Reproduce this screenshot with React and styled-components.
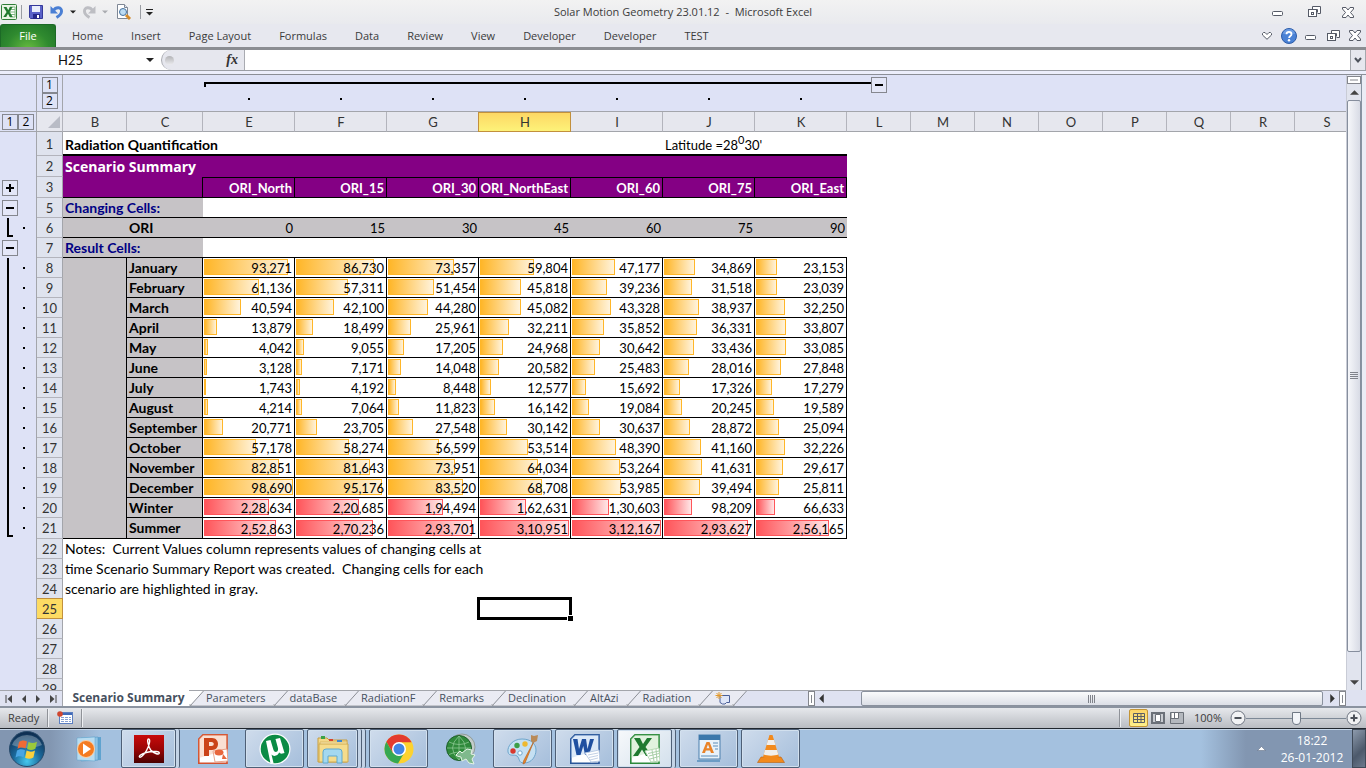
import React from "react";
import styled, { createGlobalStyle, css } from "styled-components";

const Global = createGlobalStyle`
  * { box-sizing: border-box; }
  html, body { margin: 0; padding: 0; height: 100%; overflow: hidden; }
  #root { height: 100%; }
  button, input { font: inherit; color: inherit; margin: 0; padding: 0; border: 0; background: none; }
  svg { display: block; flex: none; }
`;

const ui = '"Open Sans", "Noto Sans", sans-serif';
const cellFont = 'Lato, "Open Sans", sans-serif';

const Desktop = styled.div`
  display: flex;
  flex-direction: column;
  height: 100vh;
  font-family: ${ui};
  font-size: 11px;
  line-height: 16px;
  color: #3b3b3b;
  background: #e6e7ef;
`;

/* Title bar */
const TitleBar = styled.header`
  display: flex;
  align-items: center;
  height: 24px;
  flex: none;
  background: linear-gradient(#f2f2f2, #e9eaee);
`;
const TitleSide = styled.div`
  display: flex;
  align-items: center;
  flex: 1 1 0;
  gap: ${(p) => p.$gap || 0}px;
  justify-content: ${(p) => (p.$end ? "flex-end" : "flex-start")};
  padding: ${(p) => (p.$end ? "0 12px 0 1px" : "0 12px 0 1px")};
`;
const Title = styled.h1`
  margin: 0;
  font-size: 11px;
  line-height: 16px;
  font-weight: 400;
  white-space: pre;
`;
const IconButton = styled.button`
  display: flex;
  align-items: center;
  justify-content: center;
  width: ${(p) => p.$w || 16}px;
  height: 16px;
  flex: none;
`;
const QuickDivider = styled.span`
  width: 1px;
  height: 14px;
  background: #9a9da3;
  margin: 0 ${(p) => p.$r || 0}px 0 ${(p) => p.$l || 0}px;
`;

/* Ribbon */
const Ribbon = styled.nav`
  display: flex;
  height: 26px;
  flex: none;
  border-bottom: 3px solid #8b8d92;
  background: #e7e8ef;
`;
const FileTab = styled.button`
  width: 56px;
  height: 23px;
  border: 1px solid #1c6a26;
  border-bottom: 0;
  border-radius: 3px 3px 0 0;
  color: #fff;
  background: radial-gradient(ellipse at 50% 110%, #66bb3f, #2f8a2f 55%, #1f7328);
  margin-right: 2px;
`;
const RibbonTab = styled.button`
  padding: 0 14px;
  height: 23px;
`;
const RibbonTools = styled.div`
  display: flex;
  align-items: center;
  gap: 6px;
  margin-left: auto;
  padding-right: 3px;
`;

/* Formula bar */
const FormulaBar = styled.div`
  display: flex;
  align-items: stretch;
  height: 21px;
  flex: none;
  background: #fff;
  border-bottom: 1px solid #9b9ea5;
  color: #111;
`;
const NameBox = styled.input`
  width: 141px;
  text-align: center;
  font-family: ${cellFont};
  font-size: 13px;
  outline: 0;
`;
const NameArrow = styled.button`
  display: flex;
  align-items: center;
  justify-content: center;
  width: 18px;
`;
const FxArea = styled.div`
  display: flex;
  align-items: center;
  justify-content: space-between;
  width: 84px;
  margin-left: 2px;
  padding: 0 6px 0 3px;
  border: 1px solid #a9abb1;
  border-width: 0 1px;
  border-radius: 10px 0 0 10px;
  background: #e6e7ee;
`;
const Knob = styled.span`
  width: 9px;
  height: 9px;
  border-radius: 50%;
  background: linear-gradient(#b2b3b6, #ececef);
`;
const FxButton = styled.button`
  font: italic 700 14px/18px "Liberation Serif", serif;
  color: #333;
`;
const FormulaInput = styled.input`
  flex: 1;
  min-width: 0;
  outline: 0;
`;
const ExpandButton = styled.button`
  display: flex;
  align-items: center;
  justify-content: center;
  width: 16px;
  background: #e6e7ee;
  border: 1px solid #a5a8ae;
  border-width: 0 1px;
`;
const Splitter = styled.div`
  height: 4px;
  flex: none;
  background: #eceefb;
  border-bottom: 1px solid #8b8e96;
`;

/* Workspace */
const Workspace = styled.main`
  display: flex;
  flex: 1;
  min-height: 0;
`;
const GridPane = styled.div`
  display: flex;
  flex-direction: column;
  flex: 1;
  min-width: 0;
  background: #fff;
`;
const ColumnOutline = styled.div`
  display: flex;
  height: 37px;
  flex: none;
  background: #dee2f6;
  border-bottom: 1px solid #a3a5ab;
`;
const OutlineCorner = styled.div`
  width: 37px;
  border-right: 1px solid #a3a5ab;
`;
const ColumnLevels = styled.div`
  display: flex;
  flex-direction: column;
  align-items: center;
  width: 26px;
  padding-top: 2px;
  border-right: 1px solid #a3a5ab;
`;
const LevelButton = styled.button`
  width: 16px;
  height: 16px;
  border: 1px solid #85878f;
  font-size: 12px;
  line-height: 14px;
  color: #000;
  padding: 0;
  text-align: center;
`;
const ColumnRail = styled.div`
  flex: 1;
  min-width: 0;
  padding: 2px 0 0 140px;
`;
const RailRow = styled.div`
  display: flex;
  height: 16px;
  padding-left: 1px;
`;
const ColumnBracket = styled.span`
  width: 667px;
  height: 5px;
  margin-top: 5px;
  border-top: 2px solid #000;
  border-left: 2px solid #000;
`;
const DotRow = styled.div`
  display: grid;
  grid-template-columns: repeat(7, 92px);
  justify-items: center;
  align-items: center;
  height: 12px;
`;
const Dot = styled.i`
  width: 2px;
  height: 2px;
  background: #000;
`;
const ToggleButton = styled.button`
  display: flex;
  align-items: center;
  justify-content: center;
  width: 16px;
  height: 16px;
  flex: none;
  border: 1px solid #85878f;
  background: #e3e6f7;
`;

const GridBody = styled.div`
  display: flex;
  flex: 1;
  min-height: 0;
  overflow: hidden;
`;
const RowOutline = styled.div`
  width: 37px;
  flex: none;
  background: #dee2f6;
  border-right: 1px solid #a3a5ab;
`;
const RowLevels = styled.div`
  display: flex;
  align-items: center;
  height: 20px;
  padding-left: 2px;
  border-bottom: 1px solid #a3a5ab;
`;
const OutlineRow = styled.div`
  display: grid;
  grid-template-columns: 16px 1fr;
  align-items: center;
  height: ${(p) => p.$h || 20}px;
  padding-left: 2px;
`;
const RowBracket = styled.span`
  align-self: start;
  height: ${(p) => (p.$end ? "calc(100% - 1px)" : "100%")};
  width: 6px;
  margin-left: 5px;
  border-left: 2px solid #000;
  border-bottom: ${(p) => (p.$end ? "2px solid #000" : "0")};
`;
const RowDot = styled(Dot)`
  margin-left: 5px;
`;

const SheetBox = styled.div`
  flex: 1;
  min-width: 0;
  overflow: hidden;
`;
const Sheet = styled.table`
  width: calc(100% + 13px);
  table-layout: fixed;
  border-collapse: separate;
  border-spacing: 0;
  font-family: ${cellFont};
  font-size: 13px;
  line-height: 18px;
  color: #000;
`;
const Row = styled.tr`
  height: ${(p) => p.$h || 20}px;
`;
const ColHead = styled.th`
  height: 20px;
  padding: 1px 0 0 1px;
  font-weight: 400;
  color: #333;
  background: #e6e7ee;
  border-right: 1px solid #b3b4bc;
  border-bottom: 1px solid #a3a5ab;
  ${(p) =>
    p.$on &&
    css`
      background: linear-gradient(#fdd663, #fdf279);
      border-color: #c2903c;
      box-shadow: inset 0 1px #c2903c, -1px 0 #c2903c;
    `}
`;
const RowHead = styled.th`
  padding: 0;
  font-weight: 400;
  color: #333;
  background: #dfe3ee;
  border-right: 1px solid #a3a5ab;
  border-bottom: 1px solid #b3b4bc;
  ${(p) =>
    p.$on &&
    css`
      background: #fddb63;
      border-color: #c2903c;
      box-shadow: 0 -1px #c2903c;
    `}
`;
const CornerMark = styled.svg`
  margin-left: 10px;
`;
const Cell = styled.td`
  padding: 0 2px;
  white-space: nowrap;
  overflow: hidden;
  text-align: ${(p) => (p.$right ? "right" : "left")};
  font-weight: ${(p) => (p.$bold ? 700 : 400)};
  font-size: ${(p) => (p.$bold ? 14 : 13)}px;
`;
const RadiationTitle = styled(Cell)`
  border-bottom: 2px solid #000;
  padding-top: 3px;
  sup { font-size: 11px; line-height: 0; vertical-align: 6px; }
`;
const SummaryTitle = styled(Cell)`
  background: #840084;
  color: #fff;
  font-family: ${ui};
  font-weight: 700;
  font-size: 14px;
`;
const ScenarioHead = styled.th`
  padding: 2px 2px 0 0;
  background: #840084;
  color: #fff;
  text-align: right;
  white-space: nowrap;
  border-right: 1px solid #000;
  border-bottom: 1px solid #000;
  box-shadow: inset 0 1px #000, -1px 0 #000;
`;
const PurpleFill = styled(Cell)`
  background: #840084;
  border-bottom: 1px solid #000;
`;
const GrayCell = styled(Cell)`
  background: #c6c3c6;
  color: ${(p) => (p.$blue ? "#000084" : "#000")};
  border-bottom: ${(p) => (p.$line ? "1px solid #000" : "0")};
  border-right: ${(p) => (p.$edge ? "1px solid #000" : "0")};
`;
const LinedCell = styled(Cell)`
  border-bottom: 1px solid #000;
`;
const ValueCell = styled.td`
  padding: 0;
  border-right: 1px solid #000;
  border-bottom: 1px solid #000;
`;
const ValueStack = styled.div`
  display: grid;
  padding: 0 1px;
  > * { grid-area: 1 / 1; }
`;
const Bar = styled.span`
  height: 16px;
  margin-top: 1px;
  align-self: start;
  border: 1px solid ${(p) => (p.$red ? "#ff555a" : "#ffb628")};
  background: linear-gradient(90deg, ${(p) => (p.$red ? "#ff555a, #ffe6e7" : "#ffb628, #fff3dc")});
`;
const Amount = styled.span`
  text-align: right;
  padding-right: 1px;
  padding-top: 1px;
`;
const SelectedCell = styled(Cell)`
  position: relative;
  overflow: visible;
`;
const Cursor = styled.span`
  position: absolute;
  inset: -2px -1px -1px -2px;
  border: 3px solid #000;
`;
const FillHandle = styled.i`
  position: absolute;
  right: -2px;
  bottom: -2px;
  width: 6px;
  height: 6px;
  background: #000;
  border: 1px solid #fff;
  border-width: 1px 0 0 1px;
`;

/* Scroll bars */
const VerticalBar = styled.div`
  display: flex;
  flex-direction: column;
  width: 15px;
  flex: none;
  background: #e1e4ee;
  border-left: 1px solid #c9ccd6;
`;
const SplitBox = styled.span`
  height: 8px;
  margin: 1px 0 0;
  background: #fff;
  border: 1px solid #84868d;
  display: flex;
  align-items: center;
  justify-content: center;
  flex: none;
`;
const ArrowButton = styled.button`
  display: flex;
  align-items: center;
  justify-content: center;
  width: 14px;
  height: 16px;
  flex: none;
`;
const VerticalThumb = styled.div`
  display: flex;
  align-items: center;
  justify-content: center;
  flex: 1;
  border: 1px solid #868e9d;
  border-radius: 2px;
  background: linear-gradient(90deg, #f6f7fa, #d8dbe5);
`;
const VerticalSpace = styled.span`
  height: 22px;
  flex: none;
`;
const WindowEdge = styled.div`
  width: 5px;
  flex: none;
  background: #ebecf5;
  border-left: 1px solid #8793a2;
`;

/* Sheet tabs */
const TabStrip = styled.div`
  display: flex;
  height: 16px;
  flex: none;
  background: #dfe2f1;
  color: #46505e;
  font-family: ${ui};
`;
const TabNav = styled.div`
  display: flex;
  align-items: center;
  justify-content: space-around;
  width: 63px;
  padding: 0 2px;
  border-right: 1px solid #a3a5ab;
  border-top: 1px solid #a3a5ab;
`;
const NavButton = styled.button`
  display: flex;
  width: 14px;
  justify-content: center;
`;
const ActiveTab = styled.button`
  width: 126px;
  padding-left: 5px;
  background: #fff;
  font-size: 12px;
  font-weight: 700;
  white-space: nowrap;
`;
const SheetTab = styled.button`
  display: flex;
  align-items: center;
  gap: 2px;
  padding-right: ${(p) => (p.$tight ? 1 : 7)}px;
  border-top: 1px solid #a3a5ab;
  border-bottom: 1px solid #c4c6cd;
  background: #eaebf3;
  line-height: 14px;
`;
const TabEnd = styled.span`
  display: flex;
  border-top: 1px solid #a3a5ab;
`;
const Slant = styled.svg`
  width: 15px;
  height: 15px;
`;
const TabsRest = styled.div`
  flex: 1;
  border-top: 1px solid #a3a5ab;
`;
const HorizontalBar = styled.div`
  display: flex;
  align-items: center;
  width: calc(40% - 8px);
  margin-right: 20px;
  flex: none;
  border-top: 1px solid #a3a5ab;
`;
const TabSplit = styled.span`
  width: 7px;
  height: 15px;
  border: 1px solid #84868d;
  background: #fff;
  flex: none;
  display: flex;
  justify-content: center;
  align-items: center;
`;
const HorizontalThumb = styled.div`
  display: flex;
  align-items: center;
  justify-content: center;
  flex: 1;
  height: 15px;
  margin: 0 2px 0 32px;
  border: 1px solid #8a919e;
  border-radius: 2px;
  background: linear-gradient(#fafbfc, #dcdfe7);
`;

/* Status bar */
const StatusBar = styled.footer`
  display: flex;
  align-items: center;
  height: 22px;
  flex: none;
  padding: 0 4px 0 8px;
  border-top: 2px solid #8b93a0;
  background: linear-gradient(#e6e8ec, #b9bcc2);
`;
const StatusDivider = styled.span`
  width: 2px;
  height: 18px;
  border-left: 1px solid #8f9298;
  border-right: 1px solid #eef0f3;
  margin: 0 8px;
`;
const StatusRight = styled.div`
  display: flex;
  align-items: center;
  margin-left: auto;
`;
const ViewButton = styled.button`
  display: flex;
  align-items: center;
  justify-content: center;
  width: 19px;
  height: 18px;
  ${(p) =>
    p.$on &&
    css`
      background: linear-gradient(#fcd567, #fff08a);
      border: 1px solid #c39436;
      border-radius: 2px;
    `}
`;
const ZoomLabel = styled.output`
  margin: 0 8px 0 8px;
`;
const ZoomButton = styled.button`
  display: flex;
`;
const ZoomSlider = styled.input`
  appearance: none;
  width: 100px;
  height: 18px;
  background: linear-gradient(#7d8896, #7d8896) center / 100% 1px no-repeat;
  &::-webkit-slider-thumb {
    appearance: none;
    width: 9px;
    height: 13px;
    background: #f2f4f8;
    border: 1px solid #6f7885;
    border-radius: 1px 1px 5px 5px;
  }
`;

/* Taskbar */
const Taskbar = styled.div`
  display: flex;
  align-items: center;
  height: 40px;
  flex: none;
  border-top: 1px solid #20262e;
  box-shadow: inset 0 1px #c6d6e8;
  background: linear-gradient(90deg, #8296b1 0, #8296b1 50px, #a4c1df 100px, #a4c1df calc(100% - 165px), #8296b1 calc(100% - 120px), #8296b1);
`;
const StartButton = styled.button`
  display: flex;
  width: 59px;
  padding-left: 8px;
`;
const TaskSlot = styled.div`
  display: flex;
  width: 62px;
`;
const TaskButton = styled.button`
  display: flex;
  align-items: center;
  justify-content: center;
  width: ${(p) => 59 - 4 * (p.$stack || 0)}px;
  height: 39px;
  ${(p) =>
    p.$open &&
    css`
      border: 1px solid #4e5f76;
      border-radius: 2px;
      box-shadow: inset 0 0 0 1px #d2e0ee;
      background: ${p.$front ? "linear-gradient(135deg, #f7f9fb, #d3e0ec)" : "linear-gradient(135deg, #cfdcec, #a5bedb)"};
    `}
`;
const StackEdge = styled.span`
  width: 4px;
  height: 39px;
  border-right: 1px solid #4e5f76;
  border-radius: 0 2px 2px 0;
  background: #c3d3e6;
`;
const Tray = styled.div`
  display: flex;
  align-items: center;
  margin-left: auto;
  height: 39px;
  color: #fff;
`;
const Clock = styled.time`
  width: 80px;
  margin-left: 6px;
  text-align: center;
  font-size: 12px;
  line-height: 17px;
`;
const ShowDesktop = styled.button`
  width: 14px;
  height: 39px;
  border: 1px solid #3f4a58;
  background: linear-gradient(135deg, #8d9aac, #4c596b 60%, #6c7a8d);
`;

/* Icons */
const Tri = ({ d = "down", c = "#222", s = 8 }) => {
  const paths = { down: "M0 2h8l-4 4z", up: "M0 6h8L4 2z", left: "M6 0v8L2 4z", right: "M2 0v8l4-4z" };
  return <svg width={s} height={s} viewBox="0 0 8 8"><path d={paths[d]} fill={c} /></svg>;
};
const MinIcon = () => (
  <svg width="12" height="12"><rect x=".5" y="5.500" width="10" height="4" rx="1" fill="#fff" stroke="#555a66" /></svg>
);
const RestoreIcon = () => (
  <svg width="13" height="12"><path d="M4.500 3.500v-3h8v7h-3" fill="#fff" stroke="#555a66" /><path d="M6.500 3.500h3v3" fill="none" stroke="#555a66" /><rect x=".5" y="3.500" width="8" height="7" fill="#fff" stroke="#555a66" /><rect x="3.500" y="6.500" width="2" height="2" fill="#fff" stroke="#555a66" /></svg>
);
const CloseIcon = () => (
  <svg width="12" height="11"><path d="M.5.5h3.500l2 2.500 2-2.500h3.500v1.500L8.500 5.500l3 3.500v1.500H8l-2-2.500-2 2.500H.5V9l3-3.500-3-3.500z" fill="#fff" stroke="#555a66" /></svg>
);
const HeartIcon = () => (
  <svg width="10" height="8"><path d="M.5 1.500l1-1h1.500l2 2 2-2h1.500l1 1v1.500L5 7.300.5 3z" fill="#fff" stroke="#555a66" /></svg>
);
const HelpIcon = () => (
  <svg width="16" height="16"><circle cx="8" cy="8" r="7.500" fill="#4a82d6" stroke="#2c5ca8" /><path d="M2 6a6 5 0 0 1 12 0" fill="#7faaea" opacity=".6" /><path d="M5.500 6.200c0-3.200 5-3.200 5 0 0 1.800-2.400 1.700-2.400 3.800" fill="none" stroke="#fff" strokeWidth="1.800" /><circle cx="8" cy="12.300" r="1.200" fill="#fff" /></svg>
);
const ExcelSmall = () => (
  <svg width="16" height="16"><rect x=".5" y=".5" width="15" height="15" rx="1" fill="#e9f4e4" stroke="#2f7d37" /><path d="M9 3h5v10H9z" fill="#fff" stroke="#82b984" /><path d="M9 5.500h5M9 8h5M9 10.500h5" stroke="#82b984" /><path d="M2.500 3h3l1.700 3.200L9 3h2.700L8.500 8l3.300 5H8.800L7 9.800 5.200 13H2.300l3.300-5z" fill="#217a2e" /></svg>
);
const SaveIcon = () => (
  <svg width="14" height="14"><path d="M.5.5h13v13H1.500l-1-1z" fill="#5a62c8" stroke="#34399a" /><path d="M3 1h8v6H3z" fill="#e9eefb" /><path d="M4 9h7v5H4z" fill="#26298a" /><path d="M8 10h2v3H8z" fill="#fff" /></svg>
);
const UndoIcon = ({ c = "#4a7fd4", flip }) => (
  <svg width="14" height="14" viewBox="0 0 14 14"><g transform={flip ? "translate(14 0) scale(-1 1)" : undefined}><path d="M3.500 5.500C6 1.500 12 2 11.500 6.500 11.300 9.500 9 11 6.500 12.500" fill="none" stroke={c} strokeWidth="3" /><path d="M.5 1v7.500H8z" fill={c} /></g></svg>
);
const PreviewIcon = () => (
  <svg width="16" height="16"><path d="M1.500.5h7l3 3v11h-10z" fill="#fff" stroke="#7e8795" /><path d="M8.500.5v3h3" fill="#dfe5ee" stroke="#7e8795" /><circle cx="7" cy="8" r="3.500" fill="#bcdcf3" stroke="#44719f" /><path d="M10 11l4 4" stroke="#d38b2c" strokeWidth="3" /></svg>
);
const MacroIcon = () => (
  <svg width="16" height="14"><rect x="2.500" y="1.500" width="13" height="11" fill="#fff" stroke="#5b7ec0" /><path d="M3 2h12v2H3z" fill="#3f69b8" /><path d="M4 6.500h10M4 8.500h10M4 10.500h10" stroke="#86a1d4" strokeDasharray="3 1" /><circle cx="3" cy="3" r="2.800" fill="#d0462f" /></svg>
);
const NewSheetIcon = () => (
  <svg width="16" height="13"><path d="M5 3.500h9.500v7h-3l-1.500 1.500H7.500L5 10.500z" fill="#dfe6f8" stroke="#4a5f98" /><path d="M4 0v7M.5 3.500h7M1.500 1l5 5M6.500 1l-5 5" stroke="#e39a2d" /></svg>
);

const Orb = () => (
  <svg width="38" height="38" viewBox="0 0 38 38">
    <defs>
      <radialGradient id="orb" cx=".5" cy=".85" r=".8"><stop offset="0" stopColor="#45c8ee" /><stop offset=".5" stopColor="#1a6799" /><stop offset="1" stopColor="#0f2f52" /></radialGradient>
    </defs>
    <circle cx="19" cy="19" r="17.500" fill="url(#orb)" stroke="#274a6b" />
    <path d="M4 15a15.500 13.500 0 0 1 30 0c-9 4-20 4-30 0z" fill="#fff" opacity=".28" />
    <path d="M11 12c3-2 5-2 8-.5l-1.500 7c-3-1.500-5-1.500-8 .3z" fill="#ee6a35" />
    <path d="M20.500 12c3 1.500 5.500 1.500 8.500-.3l-1.600 7c-3 1.700-5.300 1.700-8.300.3z" fill="#9bc93b" />
    <path d="M9 20.500c3-1.700 5-1.700 8-.2l-1.500 7c-3-1.500-5-1.500-8 .2z" fill="#49a5e4" />
    <path d="M18.600 20.600c3 1.500 5.300 1.500 8.400-.1l-1.600 7c-3 1.700-5.300 1.700-8.300.2z" fill="#fbd03d" />
  </svg>
);
const MediaIcon = () => (
  <svg width="28" height="28"><path d="M9 3l17-1v23l-17 1z" fill="#5fa3cf" /><path d="M6 3l17-1v23L6 26z" fill="#8fc4e5" stroke="#4d94c2" strokeWidth=".5" /><path d="M2 3l18-1v24L2 25z" fill="#b8dcf0" stroke="#5ca2cc" strokeWidth=".5" /><circle cx="11" cy="14" r="8.500" fill="#f47b20" stroke="#fbd1a8" /><path d="M8 8.500v11l8-5.500z" fill="#fff" /></svg>
);
const AcrobatIcon = () => (
  <svg width="30" height="30"><defs><linearGradient id="acro" x2="0" y2="1"><stop offset="0" stopColor="#c80a0a" /><stop offset=".5" stopColor="#9b0505" /><stop offset="1" stopColor="#4a0000" /></linearGradient></defs><path d="M0 1h30v28H0z" fill="url(#acro)" /><path d="M14.500 5c2.500 0 .5 7-2 11.500S6.500 24 5.500 23c-1.500-1.800 6-4.800 10.500-5.300 4-.5 9.500-.4 9.300 1.500-.3 2-6-.2-8.600-3.200C14.500 13 12.500 5 14.500 5z" fill="none" stroke="#fff" strokeWidth="1.400" /></svg>
);
const OfficeIcon = ({ c, light, mark }) => (
  <svg width="30" height="30" viewBox="0 0 30 30">
    <path d="M5 .8h24v28.400H.8V5z" fill="#fff" stroke={c} strokeWidth="1.600" />
    <path d="M5 .8h24v15L.8 24V5z" fill={light} opacity=".35" />
    {mark}
  </svg>
);
const PptIcon = () => (
  <OfficeIcon c="#d35230" light="#f4a582" mark={<><path d="M6 4h8c8 0 8 12 0 12h-3v6H6zM11 8v4h2.500c3 0 3-4 0-4z" fill="#cb4318" fillRule="evenodd" /><path d="M15 17l14-2 1 12-13 1z" fill="#fff" stroke="#e9a48c" /><ellipse cx="21" cy="18.500" rx="4.500" ry="3" fill="#e8663c" /><path d="M25 20l4 5h-5z" fill="#e8663c" /></>} />
);
const WordIcon = () => (
  <OfficeIcon c="#2a5699" light="#9cbfea" mark={<><path d="M3 5h4.500l1.500 10L12 5h4l1.500 10L20 5h4l-5 16h-4l-1.700-9-2.800 9H6.500z" fill="#1f4fa0" /><path d="M15 19l14-3 1 11-9 1z" fill="#fff" stroke="#b9cbe4" /><path d="M18 21l10-2M19 23.500l9-2M20 26l8-2" stroke="#c3d1e6" /></>} />
);
const ExcelIcon = () => (
  <OfficeIcon c="#2c8a3c" light="#a8dba0" mark={<><path d="M4 4h6l3 6 4-6h5l-6.500 9L22 22h-6l-4-6.500L8 22H3l6.500-9z" fill="#1f7a30" /><path d="M15 17l14-3 1 13-9 1z" fill="#fff" stroke="#b6d9b4" /><path d="M18 19.500l11-2.500M19 22l10-2.500M20 25l9-2.500M22 16l2 11M26 15l1 12" stroke="#a9cfa8" /></>} />
);
const TorrentIcon = () => (
  <svg width="32" height="32"><circle cx="16" cy="16" r="15.500" fill="#fff" /><circle cx="16" cy="16" r="14.300" fill="#0b8b44" /><path d="M7 8l4.500-1 3 10c.8 2.500 4 2.500 4.500 0 .2-1 0-2-.3-3L16.500 6l4.500-1 4.500 15-2 .6c-1.500.4-2.700 0-3.300-1.300C19 23 14.500 24 12.500 21.500l2 8.500-3 .5z" fill="#fff" /></svg>
);
const FolderIcon = () => (
  <svg width="34" height="32"><path d="M2 5h9l2 2h18v22H2z" fill="#f3d98a" stroke="#c79d3f" /><path d="M4 9h27v19H4z" fill="#fbedb6" stroke="#dbb964" /><path d="M3 11h29v18H3z" fill="#f5dc8c" stroke="#cfa94e" /><path d="M5 3h4v3H5z" fill="#3ba147" /><path d="M13 6h4v2h-4z" fill="#d8442b" /><path d="M21 7h5v2h-5z" fill="#3b87d0" /><path d="M7 30V19q0-3 3-3h13q3 0 3 3v11h-5v-7h-9v7z" fill="#a3d8ef" stroke="#5ea9cf" /></svg>
);
const ChromeIcon = () => (
  <svg width="30" height="30" viewBox="0 0 30 30"><circle cx="15" cy="15" r="14.500" fill="#fdd22f" /><path d="M15 .5A14.500 14.500 0 0 0 2.400 7.800l6.300 10.900L15 8.200h12.600A14.500 14.500 0 0 0 15 .5z" fill="#e33b2e" /><path d="M2.400 7.800A14.500 14.500 0 0 0 14 29.500l6.300-10.800L15 22 8.700 18.700z" fill="#35a852" /><circle cx="15" cy="15" r="7" fill="#fff" /><circle cx="15" cy="15" r="5.500" fill="#4285e4" /></svg>
);
const GlobeIcon = () => (
  <svg width="30" height="32"><circle cx="16" cy="14" r="13" fill="#c3ccca" stroke="#8f9c98" /><circle cx="13" cy="15" r="12.500" fill="#2f8a3b" stroke="#1e5f2b" /><path d="M13 3v24M1 15h24M3 9q10 5 20 0M3 21.500q10-5 20 0M13 3q-13 12 0 24M13 3q13 12 0 24" fill="none" stroke="#8cc792" strokeWidth=".8" /><path d="M10 22l4-4 2 2 5-4 5 1-1 4 4 1-3 4 2 5-5-1-3-4-4 2-1-4-4-1z" fill="#7fb98c" stroke="#e5f3e6" /></svg>
);
const PaintIcon = () => (
  <svg width="34" height="32"><path d="M16 6C7 6 1 13 2 19c1 5 6 2 9 4s1 7 7 7c8 0 12-7 12-13S25 6 16 6z" fill="#c5e0f2" stroke="#6da5cc" /><circle cx="7" cy="18" r="2.700" fill="#d8382e" /><circle cx="11" cy="12.500" r="2.700" fill="#3c9e48" /><circle cx="19" cy="11" r="2.700" fill="#eeb930" /><circle cx="14" cy="20" r="2.200" fill="#fff" stroke="#6da5cc" /><path d="M28 8l-9 22-2 1 .5-3z" fill="#e8862c" stroke="#b25a15" strokeWidth=".6" /><path d="M25 2l3 1 4-1-1 6-4 2-2-2z" fill="#b98a58" /></svg>
);
const WordPadIcon = () => (
  <svg width="24" height="30"><rect x="2" y="1" width="21" height="24" fill="#e9f2fa" stroke="#4c80ad" /><path d="M2 1h21v5H2z" fill="#3c78ab" /><path d="M5 19l4.500-11h3L17 19h-3l-1-2.500H8.800L8 19zm4.500-4.700h3L11 10.500z" fill="#e98328" fillRule="evenodd" /><path d="M16 9h5M16 12h5M18 15h3M4 22h17" stroke="#5d8db8" /><path d="M0 27h23" stroke="#6c9cc5" strokeWidth="2" /></svg>
);
const VlcIcon = () => (
  <svg width="28" height="30"><path d="M4 23h20l3.500 5.500H.5z" fill="#f28a1d" stroke="#b95f0d" strokeWidth=".6" /><path d="M12.500 1h3L22 23c-3 2-13 2-16 0z" fill="#f28a1d" /><path d="M11 6h6l1.500 5h-9zM8 16h12l1.300 4.500c-4 1.500-10.600 1.500-14.600 0z" fill="#f1efec" /></svg>
);

/* Data */
const months = [
  [8, "January", [93271, 86730, 73357, 59804, 47177, 34869, 23153]],
  [9, "February", [61136, 57311, 51454, 45818, 39236, 31518, 23039]],
  [10, "March", [40594, 42100, 44280, 45082, 43328, 38937, 32250]],
  [11, "April", [13879, 18499, 25961, 32211, 35852, 36331, 33807]],
  [12, "May", [4042, 9055, 17205, 24968, 30642, 33436, 33085]],
  [13, "June", [3128, 7171, 14048, 20582, 25483, 28016, 27848]],
  [14, "July", [1743, 4192, 8448, 12577, 15692, 17326, 17279]],
  [15, "August", [4214, 7064, 11823, 16142, 19084, 20245, 19589]],
  [16, "September", [20771, 23705, 27548, 30142, 30637, 28872, 25094]],
  [17, "October", [57178, 58274, 56599, 53514, 48390, 41160, 32226]],
  [18, "November", [82851, 81643, 73951, 64034, 53264, 41631, 29617]],
  [19, "December", [98690, 95176, 83520, 68708, 53985, 39494, 25811]],
  [20, "Winter", [228634, 220685, 194494, 162631, 130603, 98209, 66633]],
  [21, "Summer", [252863, 270236, 293701, 310951, 312167, 293627, 256165]],
];
const fmt = new Intl.NumberFormat("en-IN");
const columns = ["B", "C", "E", "F", "G", "H", "I", "J", "K", "L", "M", "N", "O", "P", "Q", "R", "S"];
const widths = [64, 76, 92, 92, 92, 92, 92, 92, 92, 64, 64, 64, 64, 64, 64, 64];
const notes = [
  [22, "Notes:  Current Values column represents values of changing cells at"],
  [23, "time Scenario Summary Report was created.  Changing cells for each"],
  [24, "scenario are highlighted in gray."],
];
const Column = styled.col`
  width: ${(p) => p.$w}px;
`;
const NoteCell = styled(Cell)`
  white-space: pre;
  font-size: 14px;
`;
const tabs = ["Parameters", "dataBase", "RadiationF", "Remarks", "Declination", "AltAzi", "Radiation"];
const ribbonTabs = ["Home", "Insert", "Page Layout", "Formulas", "Data", "Review", "View", "Developer", "Developer", "TEST"];

const tasks = [
  { name: "Media Player", icon: <MediaIcon /> },
  { name: "Acrobat", icon: <AcrobatIcon />, open: true, stack: 1 },
  { name: "PowerPoint", icon: <PptIcon /> },
  { name: "Torrent", icon: <TorrentIcon />, open: true },
  { name: "Explorer", icon: <FolderIcon />, open: true, stack: 2 },
  { name: "Chrome", icon: <ChromeIcon />, open: true },
  { name: "Globe", icon: <GlobeIcon /> },
  { name: "Paint", icon: <PaintIcon />, open: true },
  { name: "Word", icon: <WordIcon />, open: true },
  { name: "Excel", icon: <ExcelIcon />, open: true, stack: 1, front: true },
  { name: "WordPad", icon: <WordPadIcon />, open: true },
  { name: "VLC", icon: <VlcIcon />, open: true },
];

const Sign = ({ plus }) => (
  <svg width="8" height="8"><path d={plus ? "M0 4h8M4 0v8" : "M0 4h8"} stroke="#000" strokeWidth="2" /></svg>
);
const SlantMark = ({ first, last }) => (
  <Slant viewBox="0 0 15 15">
    <path d="M0 0h15L1 15H0z" fill={first ? "#fff" : "#eaebf3"} />
    {last && <path d="M15 0v15H1z" fill="#dfe2f1" />}
    <path d="M1 15L14.500 0" stroke="#8b8e96" fill="none" />
    <path d="M0 14h3" stroke="#a3a5ab" />
  </Slant>
);

function Grid() {
  return (
    <Sheet>
      <colgroup>
        <Column $w={26} />
        {widths.map((w, i) => <Column key={i} $w={w} />)}
        <col />
      </colgroup>
      <thead>
        <tr>
          <ColHead aria-label="Select all"><CornerMark width="12" height="12"><path d="M12 0v12H0z" fill="#b9bcc6" /></CornerMark></ColHead>
          {columns.map((c) => <ColHead key={c} scope="col" $on={c === "H"}>{c}</ColHead>)}
        </tr>
      </thead>
      <tbody>
        <Row $h={24}>
          <RowHead scope="row">1</RowHead>
          <RadiationTitle colSpan={7} $bold>Radiation Quantification</RadiationTitle>
          <RadiationTitle colSpan={2}>Latitude =28<sup>0</sup>30'</RadiationTitle>
          <Cell colSpan={8} />
        </Row>
        <Row $h={21}>
          <RowHead scope="row">2</RowHead>
          <SummaryTitle colSpan={9}>Scenario Summary</SummaryTitle>
          <Cell colSpan={8} />
        </Row>
        <Row $h={21}>
          <RowHead scope="row">3</RowHead>
          <PurpleFill colSpan={2} />
          {["ORI_North", "ORI_15", "ORI_30", "ORI_NorthEast", "ORI_60", "ORI_75", "ORI_East"].map((h) => (
            <ScenarioHead key={h} scope="col">{h}</ScenarioHead>
          ))}
          <Cell colSpan={8} />
        </Row>
        <Row>
          <RowHead scope="row">5</RowHead>
          <GrayCell colSpan={2} $blue $bold $line>Changing Cells:</GrayCell>
          <LinedCell colSpan={7} />
          <Cell colSpan={8} />
        </Row>
        <Row>
          <RowHead scope="row">6</RowHead>
          <GrayCell $line />
          <GrayCell $line $bold>ORI</GrayCell>
          {[0, 15, 30, 45, 60, 75, 90].map((n) => <GrayCell key={n} $line $right>{n}</GrayCell>)}
          <Cell colSpan={8} />
        </Row>
        <Row>
          <RowHead scope="row">7</RowHead>
          <GrayCell colSpan={2} $blue $bold $line>Result Cells:</GrayCell>
          <LinedCell colSpan={7} />
          <Cell colSpan={8} />
        </Row>
        {months.map(([n, label, values]) => {
          const red = n > 19;
          return (
            <Row key={n} $h={n === 21 ? 21 : 20}>
              <RowHead scope="row">{n}</RowHead>
              {n === 8 && <GrayCell rowSpan={14} $edge $line />}
              <GrayCell $edge $line $bold>{label}</GrayCell>
              {values.map((v, i) => (
                <ValueCell key={i}>
                  <ValueStack>
                    <Bar $red={red} style={{ width: `${(v / (red ? 312167 : 98690)) * 100}%` }} />
                    <Amount>{fmt.format(v)}</Amount>
                  </ValueStack>
                </ValueCell>
              ))}
              <Cell colSpan={8} />
            </Row>
          );
        })}
        {notes.map(([n, t]) => (
          <Row key={n}>
            <RowHead scope="row">{n}</RowHead>
            <NoteCell colSpan={17}>{t}</NoteCell>
          </Row>
        ))}
        <Row>
          <RowHead scope="row" $on>25</RowHead>
          <Cell colSpan={5} />
          <SelectedCell><Cursor /><FillHandle /></SelectedCell>
          <Cell colSpan={11} />
        </Row>
        {[26, 27, 28, 29].map((n) => (
          <Row key={n}>
            <RowHead scope="row">{n}</RowHead>
            <Cell colSpan={17} />
          </Row>
        ))}
      </tbody>
    </Sheet>
  );
}

function Outline() {
  return (
    <RowOutline>
      <RowLevels>
        <LevelButton>1</LevelButton>
        <LevelButton>2</LevelButton>
      </RowLevels>
      <OutlineRow $h={24} />
      <OutlineRow $h={21} />
      <OutlineRow $h={21}><ToggleButton aria-label="Expand"><Sign plus /></ToggleButton></OutlineRow>
      <OutlineRow><ToggleButton aria-label="Collapse"><Sign /></ToggleButton></OutlineRow>
      <OutlineRow><RowBracket $end /><RowDot /></OutlineRow>
      <OutlineRow><ToggleButton aria-label="Collapse"><Sign /></ToggleButton></OutlineRow>
      {months.map(([n]) => (
        <OutlineRow key={n}><RowBracket $end={n === 21} /><RowDot /></OutlineRow>
      ))}
    </RowOutline>
  );
}

export default function App() {
  return (
    <Desktop>
      <Global />
      <TitleBar>
        <TitleSide>
          <IconButton aria-label="Excel"><ExcelSmall /></IconButton>
          <QuickDivider $l={4} $r={6} />
          <IconButton aria-label="Save"><SaveIcon /></IconButton>
          <IconButton aria-label="Undo" $w={26}><UndoIcon /></IconButton>
          <IconButton aria-label="Undo list" $w={6}><Tri s={6} /></IconButton>
          <IconButton aria-label="Redo" $w={26}><UndoIcon c="#bdbec3" flip /></IconButton>
          <IconButton aria-label="Redo list" $w={6}><Tri s={6} c="#a9abb0" /></IconButton>
          <IconButton aria-label="Print preview" $w={32}><PreviewIcon /></IconButton>
          <QuickDivider $r={4} />
          <IconButton aria-label="Customize" $w={8}><svg width="7" height="8"><path d="M0 1.500h7" stroke="#222" /><path d="M0 4h7L3.500 7.500z" fill="#222" /></svg></IconButton>
        </TitleSide>
        <Title>Solar Motion Geometry 23.01.12  -  Microsoft Excel</Title>
        <TitleSide $end $gap={20}>
          <IconButton aria-label="Minimize"><MinIcon /></IconButton>
          <IconButton aria-label="Restore"><RestoreIcon /></IconButton>
          <IconButton aria-label="Close" $w={12}><CloseIcon /></IconButton>
        </TitleSide>
      </TitleBar>
      <Ribbon>
        <FileTab>File</FileTab>
        {ribbonTabs.map((t, i) => <RibbonTab key={i}>{t}</RibbonTab>)}
        <RibbonTools>
          <IconButton aria-label="Collapse ribbon"><HeartIcon /></IconButton>
          <IconButton aria-label="Help"><HelpIcon /></IconButton>
          <IconButton aria-label="Minimize workbook"><MinIcon /></IconButton>
          <IconButton aria-label="Restore workbook"><RestoreIcon /></IconButton>
          <IconButton aria-label="Close workbook"><CloseIcon /></IconButton>
        </RibbonTools>
      </Ribbon>
      <FormulaBar>
        <NameBox aria-label="Name box" defaultValue="H25" />
        <NameArrow aria-label="Name list"><Tri /></NameArrow>
        <FxArea><Knob /><FxButton>fx</FxButton></FxArea>
        <FormulaInput aria-label="Formula" />
        <ExpandButton aria-label="Expand formula bar"><svg width="8" height="8"><path d="M1 2l3 3.500L7 2" fill="none" stroke="#4d525c" strokeWidth="2" /></svg></ExpandButton>
      </FormulaBar>
      <Splitter />
      <Workspace>
        <GridPane>
          <ColumnOutline>
            <OutlineCorner />
            <ColumnLevels>
              <LevelButton>1</LevelButton>
              <LevelButton>2</LevelButton>
            </ColumnLevels>
            <ColumnRail>
              <RailRow><ColumnBracket /><ToggleButton aria-label="Collapse columns"><Sign /></ToggleButton></RailRow>
              <DotRow>{[0, 1, 2, 3, 4, 5, 6].map((i) => <Dot key={i} />)}</DotRow>
            </ColumnRail>
          </ColumnOutline>
          <GridBody>
            <Outline />
            <SheetBox><Grid /></SheetBox>
          </GridBody>
        </GridPane>
        <VerticalBar>
          <SplitBox><svg width="8" height="2"><path d="M0 1h8" stroke="#84868d" /></svg></SplitBox>
          <ArrowButton aria-label="Scroll up"><Tri d="up" s={9} c="#444" /></ArrowButton>
          <VerticalThumb><svg width="8" height="8"><path d="M0 .5h8M0 2.500h8M0 4.500h8M0 6.500h8" stroke="#80838b" /></svg></VerticalThumb>
          <VerticalSpace />
          <ArrowButton aria-label="Scroll down"><Tri s={9} c="#444" /></ArrowButton>
        </VerticalBar>
        <WindowEdge />
      </Workspace>
      <TabStrip>
        <TabNav>
          <NavButton aria-label="First sheet"><svg width="8" height="8"><path d="M1 0v8" stroke="#444" /><path d="M7 0v8L2.500 4z" fill="#444" /></svg></NavButton>
          <NavButton aria-label="Previous sheet"><Tri d="left" c="#444" /></NavButton>
          <NavButton aria-label="Next sheet"><Tri d="right" c="#444" /></NavButton>
          <NavButton aria-label="Last sheet"><svg width="8" height="8"><path d="M7 0v8" stroke="#444" /><path d="M1 0v8l4.500-4z" fill="#444" /></svg></NavButton>
        </TabNav>
        <ActiveTab>Scenario Summary</ActiveTab>
        {tabs.map((t, i) => <SheetTab key={t}><SlantMark first={i === 0} />{t}</SheetTab>)}
        <SheetTab aria-label="Insert sheet" $tight><SlantMark /><NewSheetIcon /></SheetTab>
        <TabEnd><SlantMark last /></TabEnd>
        <TabsRest />
        <HorizontalBar>
          <TabSplit><svg width="1" height="8"><path d="M.5 0v8" stroke="#84868d" /></svg></TabSplit>
          <ArrowButton aria-label="Scroll left"><Tri d="left" c="#333" s={9} /></ArrowButton>
          <HorizontalThumb><svg width="8" height="8"><path d="M.5 0v8M2.500 0v8M4.500 0v8M6.500 0v8" stroke="#80838b" /></svg></HorizontalThumb>
          <ArrowButton aria-label="Scroll right"><Tri d="right" c="#333" s={9} /></ArrowButton>
          <TabSplit><svg width="1" height="8"><path d="M.5 0v8" stroke="#84868d" /></svg></TabSplit>
        </HorizontalBar>
      </TabStrip>
      <StatusBar>
        Ready
        <StatusDivider />
        <IconButton aria-label="Record macro"><MacroIcon /></IconButton>
        <StatusDivider />
        <StatusRight>
          <StatusDivider />
          <ViewButton $on aria-label="Normal view"><svg width="12" height="10"><path d="M.5.5h11v9H.5zM4.500 0v10M8 0v10M0 3.500h12M0 6.500h12" fill="none" stroke="#5a5f66" /></svg></ViewButton>
          <ViewButton aria-label="Page layout view"><svg width="14" height="12"><path d="M1 1h12v10H1z" fill="#c9ccd1" stroke="#6b7078" strokeWidth="2" /><path d="M4.500 2.500h5v7h-5z" fill="#fff" stroke="#6b7078" /></svg></ViewButton>
          <ViewButton aria-label="Page break view"><svg width="14" height="12"><path d="M.5.5h13v11H.5z" fill="#b4b8be" stroke="#6b7078" /><path d="M1 .5h7.500v6H1zM4.500 1v5" fill="#fff" stroke="#6b7078" /></svg></ViewButton>
          <ZoomLabel>100%</ZoomLabel>
          <ZoomButton aria-label="Zoom out"><svg width="16" height="16"><circle cx="8" cy="8" r="7" fill="#f1f2f4" stroke="#6f7682" /><path d="M4.500 8h7" stroke="#4d525a" strokeWidth="2" /></svg></ZoomButton>
          <ZoomSlider type="range" aria-label="Zoom" min="0" max="100" defaultValue="50" />
          <ZoomButton aria-label="Zoom in"><svg width="16" height="16"><circle cx="8" cy="8" r="7" fill="#f1f2f4" stroke="#6f7682" /><path d="M4.500 8h7M8 4.500v7" stroke="#4d525a" strokeWidth="2" /></svg></ZoomButton>
        </StatusRight>
      </StatusBar>
      <Taskbar>
        <StartButton aria-label="Start"><Orb /></StartButton>
        {tasks.map((t) => (
          <TaskSlot key={t.name}>
            <TaskButton aria-label={t.name} $open={t.open} $stack={t.stack} $front={t.front}>{t.icon}</TaskButton>
            {t.stack > 0 && <StackEdge />}
            {t.stack > 1 && <StackEdge />}
          </TaskSlot>
        ))}
        <Tray>
          <svg width="9" height="5"><path d="M.5 4.500h8L4.500.5z" fill="#fff" stroke="#54627a" strokeWidth=".5" /></svg>
          <Clock>18:22<br />26-01-2012</Clock>
          <ShowDesktop aria-label="Show desktop" />
        </Tray>
      </Taskbar>
    </Desktop>
  );
}
